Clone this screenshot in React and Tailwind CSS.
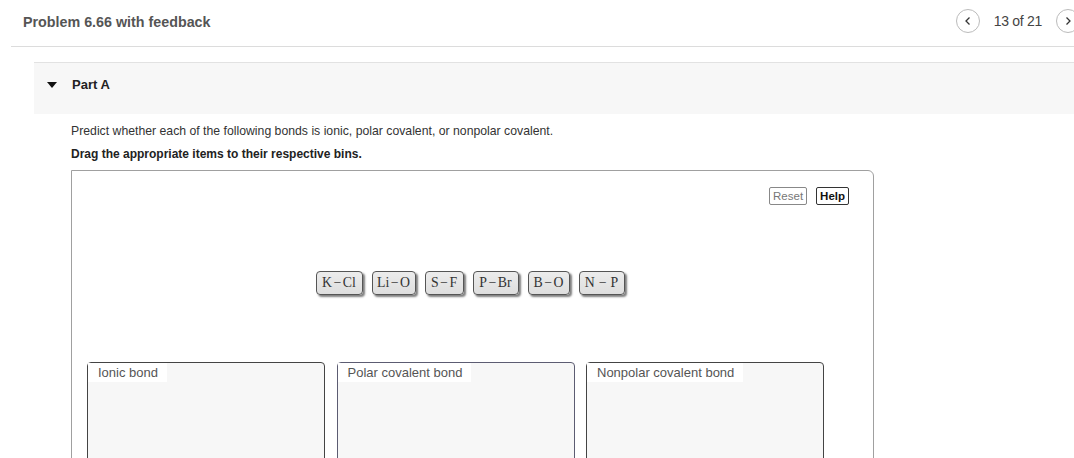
import React from 'react';

const tiles = [
    { id: 'kcl', a: 'K', b: 'Cl', w: 'w-[47px]' },
    { id: 'lio', a: 'Li', b: 'O', w: 'w-[44px]' },
    { id: 'sf', a: 'S', b: 'F', w: 'w-[39px]' },
    { id: 'pbr', a: 'P', b: 'Br', w: 'w-[46px]' },
    { id: 'bo', a: 'B', b: 'O', w: 'w-[42px]' },
    { id: 'np', a: 'N', b: 'P', w: 'w-[46px]', wide: true },
];

const bins = ['Ionic bond', 'Polar covalent bond', 'Nonpolar covalent bond'];

const Chevron = ({ dir }) => (
    <svg width="10" height="10" viewBox="0 0 10 10" fill="none" stroke="#333" strokeWidth="1.3">
        {dir === 'left' ? <path d="M6.5 1.5 3 5l3.5 3.5" /> : <path d="M3.5 1.5 7 5 3.5 8.5" />}
    </svg>
);

const App = () => {
    return (
        <div className="w-full h-[458px] overflow-hidden bg-white font-['Liberation_Sans',Arial,sans-serif]">
            {/* top bar */}
            <div className="ml-[11px] h-[47px] border-b border-[#dcdcdc] flex items-start pt-[9px] pl-[12px]">
                <h1 className="mt-[1px] text-[14.3px] leading-[24px] font-bold text-[#555]">Problem 6.66 with feedback</h1>
                <div className="ml-auto mr-[-6px] flex items-center">
                    <button className="w-[24px] h-[24px] rounded-full border border-[#bbb] flex items-center justify-center">
                        <Chevron dir="left" />
                    </button>
                    <span className="mx-[14px] text-[14px] text-[#444] tracking-[-0.3px]">13 of 21</span>
                    <button className="w-[24px] h-[24px] rounded-full border border-[#bbb] flex items-center justify-center">
                        <Chevron dir="right" />
                    </button>
                </div>
            </div>

            {/* part A header */}
            <div className="ml-[34px] mt-[15px] h-[52px] border-t border-[#e2e2e2] bg-[#f7f7f7] flex items-center pb-[8px]">
                <span className="ml-[13px] w-0 h-0 border-l-[5px] border-r-[5px] border-t-[6px] border-l-transparent border-r-transparent border-t-[#111]" />
                <span className="ml-[15px] text-[13px] font-bold text-[#222]">Part A</span>
            </div>

            {/* question */}
            <div className="ml-[71px] pt-[9px]">
                <p className="text-[12.25px] leading-[16px] text-[#333]">
                    Predict whether each of the following bonds is ionic, polar covalent, or nonpolar covalent.
                </p>
                <p className="mt-[7px] text-[12px] leading-[16px] font-bold text-[#222]">
                    Drag the appropriate items to their respective bins.
                </p>

                <div className="mt-[8px] w-[803px] h-[320px] border border-[#a0a0a0] rounded-tr-[6px]">
                    <div className="flex justify-end gap-[9px] pt-[16px] pr-[24px]">
                        <button className="h-[18px] px-[3px] border border-[#888] rounded-[2px] text-[11.5px] leading-[16px] text-[#777]">Reset</button>
                        <button className="h-[18px] px-[3px] border border-[#333] rounded-[2px] text-[11.5px] leading-[16px] font-bold text-[#111]">Help</button>
                    </div>

                    <div className="mt-[66px] flex justify-center gap-[9px] mr-[5px]">
                        {tiles.map((t) => (
                            <div
                                key={t.id}
                                className={`${t.w} h-[24px] bg-gradient-to-b from-[#ececec] to-[#dedede] border border-[#555] rounded-[4px] shadow-[2px_2px_2px_rgba(0,0,0,0.5)] flex items-center justify-center font-['Liberation_Serif','DejaVu_Serif',serif] text-[13.8px] text-[#333] whitespace-nowrap`}
                            >
                                {t.a}
                                <span className={t.wide ? 'mx-[4px]' : 'mx-[1.5px]'}>−</span>
                                {t.b}
                            </div>
                        ))}
                    </div>

                    <div className="mt-[67px] ml-[15px] flex gap-[11.5px]">
                        {bins.map((b, i) => (
                            <div
                                key={b}
                                className={`w-[238px] h-[120px] bg-[#f7f7f7] border rounded-t-[4px] ${i === 1 ? 'border-[#5c5c72]' : 'border-[#444]'}`}
                            >
                                <div className="w-fit bg-white pl-[10px] pr-[9px] h-[19px] text-[13px] leading-[20px] text-[#555]">
                                    {b}
                                </div>
                            </div>
                        ))}
                    </div>
                </div>
            </div>
        </div>
    );
};

export default App;
